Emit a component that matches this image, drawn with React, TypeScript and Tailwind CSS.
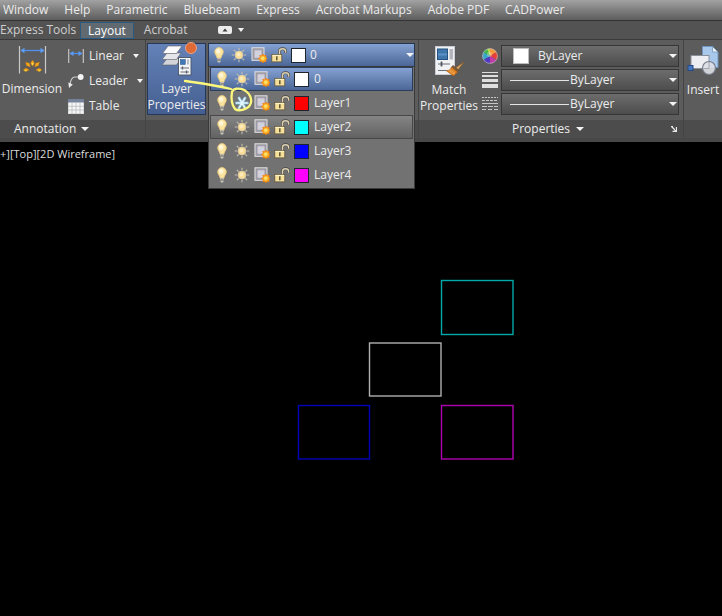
import { useState } from 'react'

type Layer = {
  name: string
  swatch: string
  frozen?: boolean
}

const menus = [
  'Window',
  'Help',
  'Parametric',
  'Bluebeam',
  'Express',
  'Acrobat Markups',
  'Adobe PDF',
  'CADPower',
]

const layers: Layer[] = [
  { name: '0', swatch: 'bg-white' },
  { name: 'Layer1', swatch: 'bg-[#ff0000]', frozen: true },
  { name: 'Layer2', swatch: 'bg-[#00ffff]' },
  { name: 'Layer3', swatch: 'bg-[#0000ff]' },
  { name: 'Layer4', swatch: 'bg-[#ff00ff]' },
]

function Caret({ className = 'w-2' }: { className?: string }) {
  return (
    <svg className={`h-1 shrink-0 ${className}`} viewBox="0 0 8 4" preserveAspectRatio="none" fill="#f4f4f4">
      <path d="M0 0h8L4 4z" />
    </svg>
  )
}

function BulbIcon() {
  return (
    <svg className="w-4 h-4 shrink-0" viewBox="0 0 16 16">
      <path d="M8 .5a4.300 4.300 0 0 0-4.300 4.300c0 2.600 2 3.600 2.300 6.200h4c.3-2.600 2.300-3.600 2.300-6.200A4.300 4.300 0 0 0 8 .5z" fill="#fbe3a0" stroke="#e6c87e" strokeWidth=".8" />
      <ellipse cx="7.200" cy="4.200" rx="2.200" ry="2.600" fill="#fff6d6" />
      <path d="M6 11.300h4v2L9 15.500H7l-1-2.200z" fill="#c9c6c0" />
      <path d="M6 13h4" stroke="#4b4740" strokeWidth=".8" />
    </svg>
  )
}

function SunIcon() {
  return (
    <svg className="w-4 h-4 shrink-0" viewBox="0 0 16 16">
      <path
        d="M8 .7v2.600M8 12.700v2.600M.7 8h2.600M12.700 8h2.600M2.800 2.800l1.900 1.900M11.300 11.300l1.900 1.900M2.800 13.200l1.900-1.900M11.300 4.700l1.900-1.900"
        stroke="#c3beb0"
        strokeWidth="1.100"
      />
      <circle cx="8" cy="8" r="3.900" fill="#fbdc92" stroke="#d8cba8" strokeWidth=".8" />
      <circle cx="7.500" cy="7.500" r="2" fill="#ffebb8" />
    </svg>
  )
}

function SnowIcon() {
  return (
    <svg className="w-4 h-4 shrink-0" viewBox="0 0 16 16">
      <path d="M2.500 8h11M5 3l6 10M11 3L5 13" stroke="#7fb0cf" strokeWidth="3" strokeLinecap="round" />
      <path d="M2.500 8h11M5 3l6 10M11 3L5 13" stroke="#e2f5ff" strokeWidth="1.600" strokeLinecap="round" />
    </svg>
  )
}

function ViewportIcon() {
  return (
    <svg className="w-4 h-4 shrink-0" viewBox="0 0 16 16">
      <rect x="1" y=".8" width="12" height="12.500" fill="#96969c" stroke="#e4e4e8" strokeWidth="1" />
      <rect x="3.200" y="3" width="7.600" height="8" fill="#d2d2dc" stroke="#b4aabc" strokeWidth=".8" />
      <path d="M12 7v9M7.500 11.500h9M8.800 8.300l6.400 6.400M15.200 8.300l-6.400 6.400" stroke="#f07a10" strokeWidth="1.400" />
      <circle cx="12" cy="11.500" r="3.300" fill="#ffb52a" stroke="#f28a16" strokeWidth=".8" />
      <circle cx="11.700" cy="11.200" r="1.700" fill="#ffe06a" />
    </svg>
  )
}

function UnlockIcon() {
  return (
    <svg className="w-4 h-4 shrink-0" viewBox="0 0 16 16">
      <path d="M8.500 8V4.200C8.500 2.500 9.500 1.700 11.500 1.700S14.600 2.500 14.600 4.200V6" fill="none" stroke="#4a463e" strokeWidth="2.800" />
      <path d="M8.500 8V4.200C8.500 2.500 9.500 1.700 11.500 1.700S14.600 2.500 14.600 4.200V5.700" fill="none" stroke="#ddd3b4" strokeWidth="1.500" />
      <rect x=".8" y="7.400" width="10" height="7.500" fill="#f5df9b" stroke="#5c533c" strokeWidth=".8" />
      <path d="M1.500 8.400h8.600" stroke="#fff3c8" />
      <path d="M5.800 9.200v4" stroke="#5f5330" strokeWidth="1.500" />
    </svg>
  )
}

function LayerRowIcons({ layer }: { layer: Layer }) {
  return (
    <>
      <BulbIcon />
      {layer.frozen ? <SnowIcon /> : <SunIcon />}
      <ViewportIcon />
      <UnlockIcon />
      <span className={`w-[15px] h-[15px] shrink-0 border border-[#20242c] ${layer.swatch}`} />
    </>
  )
}

function DimensionIcon() {
  return (
    <svg className="w-8 h-8" viewBox="0 0 32 32">
      <path d="M3.500 2v27.500M29.500 2v27.500" stroke="#c9c9c9" strokeWidth="1.200" />
      <path d="M5 6.500h23" stroke="#4f90ec" strokeWidth="1.300" />
      <path d="M4.500 6.500l4-2.800v5.600zM28.500 6.500l-4-2.800v5.600z" fill="#5b9cf5" />
      <g fill="#f5a81e" stroke="#a9651a" strokeWidth=".4">
        <path d="M16.500 16l2 3-2 3.400-2-3.400z" />
        <path d="M9.500 18l4 1.200.9 3.800-3.900-1.300zM23.500 18l-4 1.200-.9 3.800 3.900-1.300z" />
        <path d="M7 25.800l3-1.800 3.400 1.900-3.300 1.700zM26 25.800l-3-1.800-3.400 1.900 3.300 1.700z" />
      </g>
      <path d="M7.500 26.500l2.600-.6 1 1.200-2 .5zM25.500 26.500l-2.600-.6-1 1.200 2 .5z" fill="#e8d234" />
      <circle cx="16.500" cy="20" r=".9" fill="#ffe04a" />
    </svg>
  )
}

function LinearIcon() {
  return (
    <svg className="w-4 h-4 shrink-0" viewBox="0 0 16 16">
      <path d="M.7 1v14M15.300 1v14" stroke="#c4c4c4" strokeWidth="1.200" />
      <path d="M2 5.500h12" stroke="#4f90ec" strokeWidth="1.300" />
      <path d="M1.600 5.500L5.500 3v5zM14.400 5.500L10.500 3v5z" fill="#5b9cf5" />
    </svg>
  )
}

function LeaderIcon() {
  return (
    <svg className="w-4 h-4 shrink-0" viewBox="0 0 16 16">
      <path d="M2 12c.5-5 2-7.500 4.500-8H11" fill="none" stroke="#c8c8c8" strokeWidth="1.200" />
      <path d="M.3 9.500L1 15l3.800-3.600z" fill="#ececec" />
      <circle cx="12.700" cy="4" r="2.900" fill="#f5f5f5" />
    </svg>
  )
}

function TableIcon() {
  return (
    <svg className="w-4 h-4 shrink-0" viewBox="0 0 16 16">
      <rect x=".5" y="1.500" width="15" height="14" fill="#f6f6f6" stroke="#dcdcdc" />
      <path d="M0 1h16v3.500H0z" fill="#75839a" />
      <path d="M0 8.300h16M0 12h16M4 4.500V16M8 4.500V16M12 4.500V16" stroke="#b8babe" strokeWidth=".8" />
    </svg>
  )
}

function LayerPropertiesIcon() {
  return (
    <svg className="w-8 h-8" viewBox="0 0 32 32">
      <g stroke="#5a5e68" strokeWidth=".6">
        <path d="M1 21l5-6.500h14l-4.500 6.500z" fill="#d2d4d8" />
        <path d="M1 15.500l5-6.500h14l-4.500 6.500z" fill="#e4e5e8" />
        <path d="M1.500 9.500l5.500-7.500h14l-5.500 7.500z" fill="#fafafa" />
      </g>
      <rect x="17.500" y="13.500" width="12.500" height="17.500" fill="#f3f4f6" stroke="#4a5568" strokeWidth=".9" />
      <rect x="19.300" y="15.500" width="5" height="5" fill="#3f78b8" stroke="#2b5384" strokeWidth=".5" />
      <path d="M26 15.500h2v5h-2z" fill="#b9bcc2" />
      <path d="M19.500 24h8.500M19.500 28h8.500" stroke="#59606c" strokeWidth=".9" />
      <path d="M21.500 22.600v2.800M25.500 26.600v2.800" stroke="#59606c" strokeWidth="1.300" />
    </svg>
  )
}

function MatchPropertiesIcon() {
  return (
    <svg className="w-8 h-8" viewBox="0 0 32 32">
      <rect x="2.500" y="1.500" width="19" height="28" fill="#f1f2f4" stroke="#c9ccd2" />
      <rect x="4.500" y="4" width="10" height="10.500" fill="#3f77ad" stroke="#255180" />
      <path d="M5 9.500h9" stroke="#5c92c5" strokeWidth="2" />
      <path d="M16.500 4h3.500v10.500h-3.500z" fill="#b2b5bb" />
      <path d="M5 19h12M5 25.500h8" stroke="#6a707a" strokeWidth="1.200" />
      <path d="M8.500 16.600v4.800" stroke="#4f555e" strokeWidth="1.800" />
      <path d="M31 17l-8 5.500 2 2.600z" fill="#d4a66a" stroke="#8b5a24" strokeWidth=".7" />
      <path d="M20 20l6.500 5.500-2 2.300-6.500-5.400z" fill="#77583a" />
      <path d="M18.500 22l6 5-4 4-7.500-5.500c3 .3 4.500-.8 5.500-3.500z" fill="#df8426" stroke="#9d5414" strokeWidth=".6" />
      <path d="M15 25l6 4M17 24.500l5 4" stroke="#f3b257" strokeWidth=".7" />
    </svg>
  )
}

function ColorWheelIcon() {
  return (
    <svg className="w-4 h-4" viewBox="0 0 16 16">
      <path d="M8 8V.5A7.500 7.500 0 0 1 14.500 4.200z" fill="#f5973c" />
      <path d="M8 8l6.500-3.800a7.500 7.500 0 0 1 0 7.600z" fill="#e84038" />
      <path d="M8 8l6.500 3.800A7.500 7.500 0 0 1 8 15.500z" fill="#c03ba6" />
      <path d="M8 8v7.500a7.500 7.500 0 0 1-6.500-3.700z" fill="#5039c0" />
      <path d="M8 8l-6.500 3.800a7.500 7.500 0 0 1 0-7.600z" fill="#3ba6c8" />
      <path d="M8 8L1.500 4.200A7.500 7.500 0 0 1 5 1.100z" fill="#3fbb4c" />
      <path d="M8 8L5 1.100A7.500 7.500 0 0 1 8 .5z" fill="#b8dc4c" />
      <circle cx="8" cy="8" r="7.400" fill="none" stroke="#c8c8c8" strokeWidth=".6" />
      <circle cx="7.500" cy="6.500" r="2.500" fill="#ffffff" opacity=".3" />
    </svg>
  )
}

function LineweightIcon() {
  return (
    <svg className="w-4 h-4" viewBox="0 0 16 16" fill="#dedede">
      <path d="M0 0h16v1H0zM0 3h16v2H0zM0 7h16v3H0zM0 12h16v4H0z" />
    </svg>
  )
}

function LinetypeIcon() {
  return (
    <svg className="w-4 h-4" viewBox="0 0 16 16" stroke="#c6c6c6">
      <path d="M0 1.500h16" strokeDasharray="2 1" />
      <path d="M0 4.500h16" strokeDasharray="3 1" />
      <path d="M0 7.500h16" />
      <path d="M0 10.500h16" strokeDasharray="5 1" />
      <path d="M0 13.500h16" strokeDasharray="4 2" />
    </svg>
  )
}

function InsertIcon() {
  return (
    <svg className="w-8 h-8 shrink-0" viewBox="0 0 32 32">
      <path d="M15.500 1.500h10l5.500 5.500v15.500h-15.500z" fill="#a9c9ec" stroke="#7296bd" />
      <path d="M25.500 1.500V7h5.500z" fill="#edf5fc" stroke="#7296bd" strokeWidth=".8" />
      <rect x="4" y="10.500" width="18" height="13" fill="#eceef1" stroke="#8a9099" />
      <rect x="1" y="20.500" width="5" height="5" fill="#4576c0" stroke="#254b86" />
      <circle cx="22" cy="23" r="6.500" fill="#dde0e6" fillOpacity=".9" stroke="#767c88" strokeWidth="1.200" />
      <path d="M22 17v6.500h-5.500" fill="none" stroke="#979ca6" strokeWidth=".8" />
    </svg>
  )
}

function LayerCombo() {
  const [current, setCurrent] = useState('0')
  const [isOpen, setIsOpen] = useState(true)
  const active = layers.find((layer) => layer.name === current) ?? layers[0]

  return (
    <div className="relative flex-1 self-start min-w-0">
      <div className="flex items-center gap-1 h-6 pl-[2px] border border-[#25344f] bg-linear-to-b from-[#84a2d3] to-[#4c6797]">
        <LayerRowIcons layer={active} />
        <select
          aria-label="Current layer"
          value={current}
          onMouseDown={(event) => {
            event.preventDefault()
            setIsOpen(!isOpen)
          }}
          onChange={(event) => setCurrent(event.target.value)}
          className="flex-1 min-w-0 appearance-none bg-transparent outline-none"
        >
          {layers.map((layer) => (
            <option key={layer.name}>{layer.name}</option>
          ))}
        </select>
        <Caret />
      </div>

      {isOpen && (
        <ul className="absolute inset-x-0 top-full z-10 -mt-px border border-[#3a3a3a] bg-[#727272] px-px pb-px">
          {layers.map((layer) => (
            <li key={layer.name}>
              <button
                type="button"
                onClick={() => {
                  setCurrent(layer.name)
                  setIsOpen(false)
                }}
                className={`flex items-center gap-1 w-full h-6 px-[3px] border ${
                  layer.name === '0'
                    ? 'border-[#2c3c59] bg-linear-to-b from-[#84a2d3] to-[#4c6797]'
                    : layer.name === 'Layer2'
                      ? 'border-[#474747] bg-linear-to-b from-[#858585] to-[#626262]'
                      : 'border-transparent'
                }`}
              >
                <LayerRowIcons layer={layer} />
                <span className="pl-px">{layer.name}</span>
              </button>
            </li>
          ))}
        </ul>
      )}
    </div>
  )
}

function PropertyCombo({ label, swatch = false }: { label: string; swatch?: boolean }) {
  return (
    <div className="flex items-center gap-px h-[22px] pl-2 pr-px border border-[#363636] bg-linear-to-b from-[#6d6d6d] to-[#4d4d4d]">
      {swatch ? (
        <span className="w-4 h-4 ml-[3px] mr-2 shrink-0 border border-[#bdbdbd] bg-white" />
      ) : (
        <span className="w-[59px] shrink-0 border-t border-[#e4e4e4]" />
      )}
      <select aria-label={label} className="flex-1 min-w-0 appearance-none bg-transparent outline-none">
        <option>ByLayer</option>
        <option>ByBlock</option>
      </select>
      <Caret />
    </div>
  )
}

export default function App() {
  return (
    <div className="min-h-screen flex flex-col overflow-hidden bg-black font-['Open_Sans','Noto_Sans',sans-serif] text-xs text-[#ececec]">
      <nav className="flex items-center gap-4 h-[21px] pl-[3px] whitespace-nowrap border-b border-[#343434] bg-linear-to-b from-[#a2a2a2] to-[#5d5d5d]">
        {menus.map((menu) => (
          <button key={menu} type="button">
            {menu}
          </button>
        ))}
      </nav>

      <div className="flex items-center h-[19px] whitespace-nowrap border-b border-[#3b3b3b] bg-[#535353] text-[#cfcfcf]">
        <button type="button" className="w-20 text-left whitespace-nowrap">
          Express Tools
        </button>
        <button type="button" className="h-[17px] px-[7px] border border-[#2b5a80] bg-[#606a70] leading-4 text-white">
          Layout
        </button>
        <button type="button" className="px-[10px]">
          Acrobat
        </button>
        <button type="button" aria-label="Minimize ribbon" className="flex items-center gap-[6px] ml-5">
          <svg className="w-[14px] h-2" viewBox="0 0 14 8">
            <rect width="14" height="8" rx="2" fill="#ececec" />
            <path d="M4.500 5.500h5L7 2.500z" fill="#3c3c3c" />
          </svg>
          <Caret className="w-[6px]" />
        </button>
      </div>

      <div className="flex h-[102px] border-b-4 border-[#484848] bg-[#5c5c5c]">
        <section className="flex flex-col w-[146px] shrink-0 border-r border-[#444444]">
          <div className="flex flex-1 pt-[3px]">
            <button type="button" className="flex flex-col items-center w-16 shrink-0 pt-px leading-4">
              <DimensionIcon />
              <span className="pt-[5px]">Dimension</span>
            </button>
            <div className="flex flex-col pl-1">
              <button type="button" className="flex items-center gap-[5px] h-[25px]">
                <LinearIcon />
                Linear
                <Caret className="w-[6px] ml-1" />
              </button>
              <button type="button" className="flex items-center gap-[5px] h-[25px]">
                <LeaderIcon />
                Leader
                <Caret className="w-[6px] ml-1" />
              </button>
              <button type="button" className="flex items-center gap-[5px] h-[25px]">
                <TableIcon />
                Table
              </button>
            </div>
          </div>
          <button type="button" className="flex items-center gap-[5px] h-[18px] pl-[14px] bg-[#4c4c4c]">
            Annotation
            <Caret />
          </button>
        </section>

        <section className="flex flex-col flex-1 min-w-0 border-r border-[#444444]">
          <div className="flex flex-1 gap-[2px] pt-[3px] pl-px pr-[3px]">
            <button
              type="button"
              className="relative flex flex-col items-center w-[59px] h-[72px] shrink-0 border border-[#26385a] bg-linear-to-b from-[#6482b8] to-[#455f91] leading-4"
            >
              <LayerPropertiesIcon />
              <span className="pt-[5px]">
                Layer
                <br />
                Properties
              </span>
              <span className="absolute right-2 -top-[2px] w-3 h-3 rounded-full border border-[#e8a183] bg-[#df6a35]" />
            </button>
            <LayerCombo />
          </div>
          <div className="h-[18px] bg-[#4c4c4c]" />
        </section>

        <section className="flex flex-col w-[265px] shrink-0 border-r border-[#444444]">
          <div className="flex flex-1 pt-[5px] pr-1">
            <button type="button" className="flex flex-col items-center w-[60px] shrink-0 leading-4">
              <MatchPropertiesIcon />
              <span className="pt-[5px]">
                Match
                <br />
                Properties
              </span>
            </button>
            <div className="flex flex-col gap-2 pt-[3px] px-[3px]">
              <ColorWheelIcon />
              <LineweightIcon />
              <LinetypeIcon />
            </div>
            <div className="flex flex-col flex-1 gap-[2px] min-w-0">
              <PropertyCombo label="Object color" swatch />
              <PropertyCombo label="Lineweight" />
              <PropertyCombo label="Linetype" />
            </div>
          </div>
          <div className="flex items-center h-[18px] px-[6px] bg-[#4c4c4c]">
            <button type="button" className="flex flex-1 items-center justify-center gap-[6px]">
              Properties
              <Caret />
            </button>
            <button type="button" aria-label="Properties settings">
              <svg className="w-[6px] h-[6px]" viewBox="0 0 6 6" fill="none" stroke="#e8e8e8">
                <path d="M0 .5h2M1 1l4 4M5.500 1v4.500H1.500" strokeWidth="1.300" />
              </svg>
            </button>
          </div>
        </section>

        <section className="flex flex-col w-[38px] shrink-0">
          <button type="button" className="flex flex-col flex-1 items-center pt-[5px] leading-4">
            <InsertIcon />
            <span className="pt-[5px]">Insert</span>
          </button>
          <div className="h-[18px] bg-[#4c4c4c]" />
        </section>
      </div>

      <main className="relative flex-1">
        <p className="pt-1 text-[11px] leading-4 text-[#dcdcdc]">+][Top][2D Wireframe]</p>
        <svg className="absolute left-0 top-0 w-[722px] h-[474px]" viewBox="0 142 722 474" fill="none" strokeWidth="1.400">
          <rect x="441.500" y="280.500" width="71.500" height="54" stroke="#00a8a8" />
          <rect x="369.500" y="343" width="71.500" height="53" stroke="#b0b0b0" />
          <rect x="298.500" y="405.500" width="71" height="53.500" stroke="#0000b4" />
          <rect x="441.500" y="405.500" width="71.500" height="53.500" stroke="#b000b0" />
        </svg>
      </main>

      {/* freehand markup around the frozen layer */}
      <svg
        className="absolute left-[180px] top-[74px] z-20 w-20 h-10 pointer-events-none"
        viewBox="180 74 80 40"
        fill="none"
        stroke="#fbf77c"
        strokeWidth="2.300"
        strokeLinecap="round"
        strokeLinejoin="round"
      >
        <path d="M185 81c14 2 30 4 46 8" />
        <path d="M244 90c-5-2-11-2-12 2-1 6 0 13 3 17 4 3 13 0 15-4 3-5 0-13-8-16" />
      </svg>
    </div>
  )
}
